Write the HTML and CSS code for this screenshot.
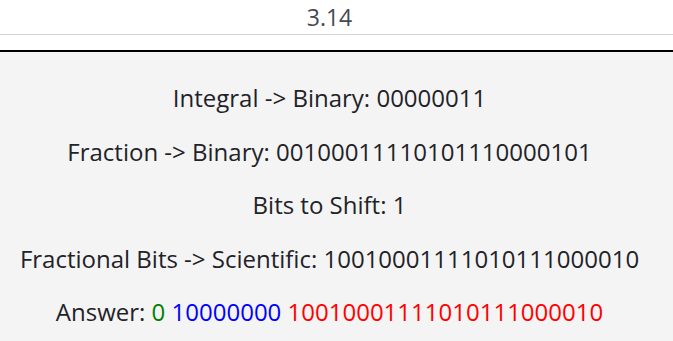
FILE: index.html
```html
<!DOCTYPE html>
<html lang="en">
<head>
    <meta charset="UTF-8">
    <meta name="viewport" content="width=device-width, initial-scale=1.0">
    <title>Float to Binary</title>
    <link rel="stylesheet" href="styles.css">
</head>
<body>
    <div class="top">
        <input class="number-input" type="text" value="3.14">
    </div>

    <div class="result">
        <p>Integral -&gt; Binary: 00000011</p>
        <p>Fraction -&gt; Binary: 00100011110101110000101</p>
        <p>Bits to Shift: 1</p>
        <p>Fractional Bits -&gt; Scientific: 10010001111010111000010</p>
        <p>Answer: <span class="sign">0</span> <span class="exponent">10000000</span> <span class="mantissa">10010001111010111000010</span></p>
    </div>
</body>
</html>
```

FILE: styles.css
```css
body {
    margin: 0;
    font-family: "Open Sans", "Noto Sans", sans-serif;
    color: #1f2328;
    background: #fff;
}
.top {
    height: 50px;
    border-bottom: 2px solid #000;
}
.number-input {
    display: block;
    width: 100%;
    height: 35px;
    box-sizing: border-box;
    border: none;
    border-bottom: 1px solid #d0d5dc;
    text-align: center;
    font-family: inherit;
    font-size: 23px;
    color: #454a50;
    padding: 0 14px 0 0;
    outline: none;
}
.result {
    background: #f4f4f4;
    text-align: center;
    padding: 29px 14px 0 0;
    height: calc(100vh - 52px);
    box-sizing: border-box;
    overflow: hidden;
}
.result p {
    margin: 0 0 20px;
    font-size: 24px;
    line-height: 33.5px;
}
.sign {
    color: #008000;
}
.exponent {
    color: #0000ff;
}
.mantissa {
    color: #ff0000;
}
```
